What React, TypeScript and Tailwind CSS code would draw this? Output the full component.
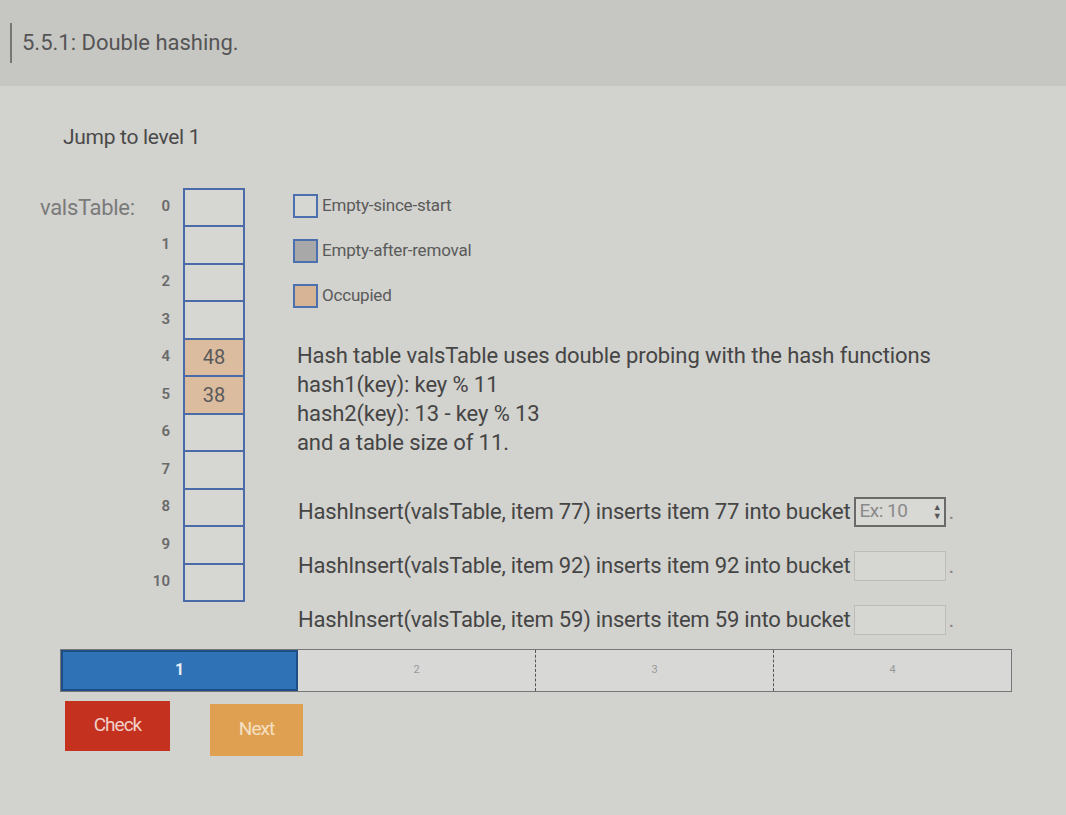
import React from "react";

const cells = ["", "", "", "", "48", "38", "", "", "", "", ""];

function Legend({ fill, label }: { fill: string; label: string }) {
  return (
    <div className="flex items-center h-[24px]">
      <div className={`w-[25px] h-[24px] border-2 border-[#4c6fae] ${fill}`} />
      <span className="ml-[4px] text-[17px] text-[#5a5a5a] tracking-[-0.2px]">{label}</span>
    </div>
  );
}

function Insert({ item, first }: { item: string; first?: boolean }) {
  return (
    <div className="flex items-center h-[30px]">
      <span>HashInsert(valsTable, item {item}) inserts item {item} into bucket</span>
      {first ? (
        <div className="ml-[4px] w-[92px] h-[30px] border-2 border-[#6a6a6a] flex items-center px-[3px] text-[#8a8a8a] bg-[#d8d8d4]">
          <span className="flex-1 text-[19px] tracking-[-0.5px]">Ex: 10</span>
          <span className="flex flex-col items-center leading-none text-[9px] text-[#555]">
            <span>▲</span>
            <span>▼</span>
          </span>
        </div>
      ) : (
        <div className="ml-[4px] w-[92px] h-[30px] border border-[#bcbcb8] bg-[#d6d6d2]" />
      )}
      <span className="ml-[2px] text-[#888]">.</span>
    </div>
  );
}

export default function App() {
  return (
    <div className="w-[1066px] h-[815px] bg-[#d2d2ce] overflow-hidden" style={{ fontFamily: "Roboto, 'Liberation Sans', sans-serif" }}>
      <div className="h-[86px] bg-[#c6c6c3] flex items-center">
        <div className="w-[2px] h-[40px] bg-[#777] ml-[10px]" />
        <div className="ml-[10px] text-[22px] text-[#555] mt-[-2px]">5.5.1: Double hashing.</div>
      </div>

      <div className="pl-[63px] pt-[36px] text-[21px] text-[#4a4a4a] tracking-[-0.3px]">Jump to level 1</div>

      <div className="flex items-start mt-[34px]">
        <div className="flex items-start w-[245px] pl-[40px]">
          <div className="w-[110px] text-[22px] text-[#7a7a7a] mt-[3px] tracking-[-0.3px]">valsTable:</div>
          <div className="flex flex-col w-[20px] items-end">
            {cells.map((_, i) => (
              <div key={i} className="h-[37.5px] flex items-center text-[15px] font-semibold text-[#6a6a6a]">{i}</div>
            ))}
          </div>
          <div className="ml-[13px] flex flex-col w-[62px] border-x-2 border-b-2 border-[#4a6aa8]">
            {cells.map((v, i) => (
              <div
                key={i}
                className={`h-[37.5px] border-t-2 border-[#4a6aa8] flex items-center justify-center text-[20px] text-[#5a5a5a] ${v ? "bg-[#dbbc9f]" : "bg-[#d6d6d2]"}`}
              >
                {v}
              </div>
            ))}
          </div>
        </div>

        <div className="ml-[48px] flex flex-col">
          <div className="flex flex-col gap-[21px] mt-[6px]">
            <Legend fill="bg-[#d6d6d2]" label="Empty-since-start" />
            <Legend fill="bg-[#a8a8a8]" label="Empty-after-removal" />
            <Legend fill="bg-[#d8b496]" label="Occupied" />
          </div>
          <div className="mt-[33px] ml-[4px] text-[22px] leading-[29px] text-[#454545] tracking-[-0.1px]">
            <div>Hash table valsTable uses double probing with the hash functions</div>
            <div>hash1(key): key % 11</div>
            <div>hash2(key): 13 - key % 13</div>
            <div>and a table size of 11.</div>
          </div>
          <div className="mt-[40px] ml-[5px] flex flex-col gap-[24px] text-[22px] text-[#454545] tracking-[-0.2px]">
            <Insert item="77" first />
            <Insert item="92" />
            <Insert item="59" />
          </div>
        </div>
      </div>

      <div className="mt-[14px] ml-[60px] w-[952px] h-[43px] flex border border-[#777] bg-[#d8d8d6]">
        <div className="w-[237px] bg-[#2f72b6] border-2 border-[#1d4f86] flex items-center justify-center text-[16px] text-[#e8eef6] font-bold">1</div>
        <div className="flex-1 flex items-center justify-center text-[11px] text-[#999] border-r border-dashed border-[#555]">2</div>
        <div className="flex-1 flex items-center justify-center text-[11px] text-[#999] border-r border-dashed border-[#555]">3</div>
        <div className="flex-1 flex items-center justify-center text-[11px] text-[#999]">4</div>
      </div>

      <div className="flex ml-[65px] mt-[9px] gap-[40px]">
        <div className="w-[105px] h-[50px] bg-[#c4321f] flex items-center justify-center text-[19px] text-[#f0d0c8] tracking-[-1px]">Check</div>
        <div className="w-[93px] h-[52px] mt-[3px] bg-[#e0a052] flex items-center justify-center text-[19px] text-[#f4e0c4] tracking-[-1px]">Next</div>
      </div>
    </div>
  );
}
